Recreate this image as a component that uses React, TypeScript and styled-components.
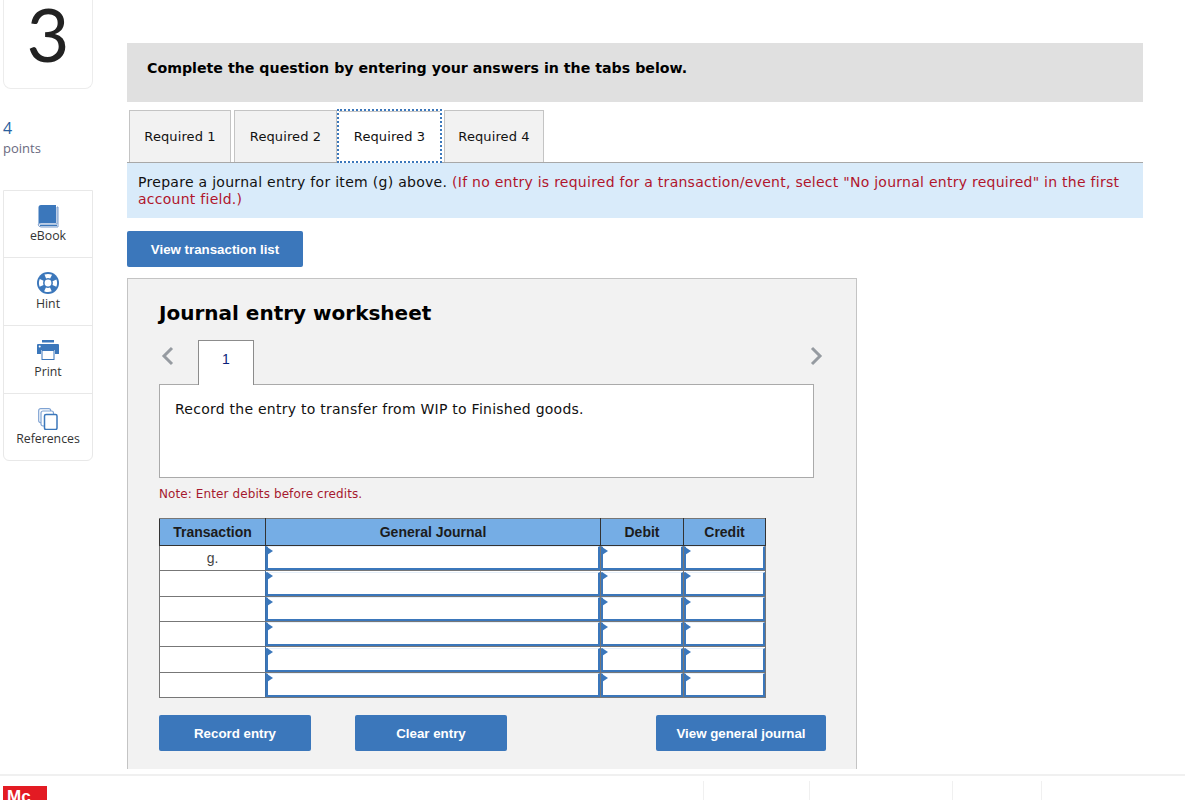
import React from "react";
import styled, { createGlobalStyle } from "styled-components";

const Global = createGlobalStyle`
  html, body { margin: 0; padding: 0; height: 100%; overflow: hidden; background: #fff; }
  * { box-sizing: border-box; }
  #root { height: 100vh; }
`;

const blue = "#3b77bb";
const verdana = `"DejaVu Sans", Verdana, sans-serif`;
const arial = `"Liberation Sans", Arial, sans-serif`;
const side = `"Open Sans", Roboto, sans-serif`;

const Page = styled.div`
  height: 100vh;
  display: flex;
  flex-direction: column;
  overflow: hidden;
`;
const Body = styled.div`
  flex: 1;
  min-height: 0;
  overflow: hidden;
  display: flex;
  padding-left: 3px;
  gap: 34px;
`;
const Sidebar = styled.aside`
  width: 90px;
  flex: none;
  font-family: ${side};
`;
const NumberCard = styled.div`
  height: 89px;
  border: 1px solid #ececec;
  border-top: none;
  border-radius: 0 0 8px 8px;
  display: flex;
  align-items: center;
  justify-content: center;
  font-family: Lato, sans-serif;
  font-size: 74px;
  font-weight: 400;
  line-height: 1;
  color: #222;
  padding-bottom: 20px;
`;
const Points = styled.div`
  margin-top: 30px;
  height: 71px;
`;
const PointsValue = styled.div`
  font-size: 16px;
  line-height: 18px;
  color: #2b5f9e;
`;
const PointsLabel = styled.div`
  font-size: 13px;
  line-height: 22px;
  color: #6a6a80;
`;
const Tools = styled.div`
  border: 1px solid #e8e8e8;
  border-radius: 0 0 6px 6px;
`;
const Tool = styled.div`
  height: 68px;
  display: flex;
  flex-direction: column;
  align-items: center;
  padding-top: 14px;
  font-size: 12.3px;
  line-height: 16px;
  color: #333;
  &:not(:last-child) { border-bottom: 1px solid #e8e8e8; }
  &:first-child { height: 67px; padding-top: 13px; }
  &:last-child { height: 66px; }
  svg { display: block; }
`;
const Main = styled.main`
  width: 1016px;
  flex: none;
  padding-top: 43px;
  font-family: ${verdana};
`;
const Banner = styled.div`
  height: 59px;
  background: #e0e0e0;
  padding: 0 0 10px 20px;
  display: flex;
  align-items: center;
  font-size: 14.2px;
  font-weight: 700;
  color: #000;
`;
const Tabs = styled.div`
  display: flex;
  margin-top: 8px;
  padding-left: 2px;
  height: 52px;
  gap: 3px;
`;
const Tab = styled.div<{ $w: number; $active?: boolean }>`
  width: ${(p) => p.$w}px;
  display: flex;
  align-items: center;
  justify-content: center;
  font-size: 13px;
  letter-spacing: 0.1px;
  color: #111;
  background: ${(p) => (p.$active ? "#fff" : "#f2f2f2")};
  border: 1px solid #c4c4c4;
  border-bottom: none;
  ${(p) =>
    p.$active &&
    `margin: -1px -1px 0 -3px;
     height: 54px;
     position: relative;
     z-index: 1;
     border: 2px dotted ${blue};
     box-shadow: inset 0 1px 0 #c4c4c4;`}
`;
const Instruction = styled.div`
  height: 56px;
  background: #d9ebfa;
  border-top: 1px solid #a8a8a8;
  padding: 11px 11px 0;
  font-size: 14px;
  line-height: 17px;
  letter-spacing: 0.29px;
  color: #111;
`;
const Red = styled.span`
  color: #b0152c;
  letter-spacing: 0.26px;
`;
const Button = styled.button<{ $w: number }>`
  width: ${(p) => p.$w}px;
  height: 36px;
  flex: none;
  border: none;
  border-radius: 2px;
  background: ${blue};
  color: #fff;
  font-family: ${arial};
  font-weight: 700;
  font-size: 13.3px;
  padding: 0;
`;
const TransactionRow = styled.div`
  margin-top: 13px;
  height: 47px;
`;
const Panel = styled.section`
  width: 730px;
  height: 491px;
  background: #f2f2f2;
  border: 1px solid #c4c4c4;
  border-bottom: none;
  padding: 0 30px 0 31px;
`;
const PanelTitle = styled.h2`
  margin: 0;
  padding-top: 22px;
  height: 61px;
  font-size: 20px;
  line-height: 25px;
  font-weight: 700;
  color: #000;
`;
const Pager = styled.div`
  display: flex;
  align-items: center;
  width: 655px;
  height: 45px;
  position: relative;
  z-index: 1;
  margin-bottom: -1px;
`;
const PagerArrow = styled.svg<{ $right?: boolean }>`
  width: 14px;
  height: 20px;
  flex: none;
  margin-bottom: 14px;
  margin-left: ${(p) => (p.$right ? "auto" : "2px")};
  margin-right: ${(p) => (p.$right ? "-9px" : "0")};
`;
const PageTab = styled.div`
  width: 56px;
  height: 45px;
  margin-left: 23px;
  padding-top: 9px;
  background: #fff;
  border: 1px solid #8c8c8c;
  border-bottom: none;
  text-align: center;
  font-family: ${arial};
  font-size: 14px;
  line-height: 18px;
  color: #0a1f7a;
`;
const Prompt = styled.div`
  width: 655px;
  height: 94px;
  background: #fff;
  border: 1px solid #aaa;
  padding: 16px 15px 0;
  font-size: 14px;
  line-height: 17px;
  letter-spacing: 0.25px;
  color: #111;
`;
const Note = styled.div`
  margin-top: 8px;
  height: 32px;
  font-size: 12px;
  line-height: 16px;
  letter-spacing: 0.1px;
  color: #a6192e;
`;
const Sheet = styled.table`
  width: 606px;
  table-layout: fixed;
  border-collapse: collapse;
  font-family: ${arial};
`;
const Head = styled.th<{ $w: number }>`
  width: ${(p) => p.$w}px;
  height: 27px;
  padding: 0;
  background: #75ade5;
  border: 1px solid #333;
  border-top-color: #777;
  font-size: 14px;
  font-weight: 700;
  color: #1c1c1c;
`;
const Row = styled.tr<{ $h: number }>`
  height: ${(p) => p.$h}px;
`;
const TxCell = styled.td`
  padding: 0;
  background: #fff;
  border: 1px solid #777;
  border-right-color: #3b6ea8;
  text-align: center;
  vertical-align: middle;
  font-size: 14px;
  line-height: 16px;
  color: #444;
`;
const EntryCell = styled.td`
  position: relative;
  padding: 0;
  background: #fff;
  border: 1px solid #777;
  &::before {
    content: "";
    position: absolute;
    left: 1px;
    top: 1px;
    border-left: 6px solid ${blue};
    border-top: 4px solid transparent;
    border-bottom: 4px solid transparent;
  }
`;
const EntryInput = styled.div`
  height: 100%;
  min-height: 24px;
  border: 2px solid ${blue};
  border-top: 1px solid #e6f0fb;
  background: #fff;
`;
const Actions = styled.div`
  display: flex;
  gap: 44px;
  margin-top: 17px;
`;
const PushedButton = styled(Button)`
  margin-left: auto;
`;
const Footer = styled.footer`
  height: 26px;
  flex: none;
  border-top: 2px solid #f0f0f0;
  display: flex;
  padding-left: 3px;
  overflow: hidden;
`;
const Logo = styled.div`
  width: 44px;
  height: 30px;
  margin-top: 10px;
  background: #e31b23;
  color: #fff;
  font-family: ${arial};
  font-weight: 700;
  font-size: 17px;
  line-height: 22px;
  padding-left: 4px;
`;
const FooterNav = styled.nav`
  margin-left: auto;
  margin-right: 143px;
  display: flex;
  padding-top: 5px;
`;
const FooterItem = styled.div<{ $w: number; $pad: number }>`
  width: ${(p) => p.$w}px;
  height: 40px;
  border-left: 1px solid #f0f0f0;
  padding: 12px 0 0 ${(p) => p.$pad}px;
`;
const FooterLast = styled.div`
  border-left: 1px solid #f0f0f0;
`;

const rows = [
  { h: 25, tx: "g." },
  { h: 26, tx: "" },
  { h: 25, tx: "" },
  { h: 25, tx: "" },
  { h: 26, tx: "" },
  { h: 25, tx: "" },
];

const BookIcon = () => (
  <svg width="22" height="24" viewBox="0 0 22 24">
    <path d="M4 1h15v18H4a2.5 2.5 0 0 0-2.5 2V3.5A2.5 2.5 0 0 1 4 1z" fill={blue} />
    <path d="M20 3h1v20H4a3 3 0 0 1-2.8-2.5A2.6 2.6 0 0 1 4 20h16z" fill="#fff" stroke="#7a9ccc" strokeWidth="1" />
    <path d="M3 21.5h17" stroke={blue} strokeWidth="1.2" />
  </svg>
);
const BuoyIcon = () => (
  <svg width="22" height="22" viewBox="0 0 22 22" style={{ marginBottom: 2 }}>
    <circle cx="11" cy="11" r="11" fill={blue} />
    <circle cx="11" cy="11" r="3.4" fill="#fff" />
    <circle
      cx="11"
      cy="11"
      r="7"
      fill="none"
      stroke="#fff"
      strokeWidth="4.2"
      strokeDasharray="6 4.996"
      strokeDashoffset="3"
    />
  </svg>
);
const PrintIcon = () => (
  <svg width="22" height="20" viewBox="0 0 22 20" style={{ marginBottom: 4 }}>
    <rect x="5" y="0" width="12" height="2.5" fill={blue} />
    <path d="M1 4h20a1 1 0 0 1 1 1v9h-4v-4H4v4H0V5a1 1 0 0 1 1-1z" fill={blue} />
    <rect x="5" y="10.5" width="12" height="9" fill="#fff" stroke={blue} strokeWidth="1" />
    <circle cx="2.7" cy="6.4" r="1" fill="#fff" />
  </svg>
);
const CopyIcon = () => (
  <svg width="20" height="22" viewBox="0 0 20 22" style={{ marginBottom: 1 }}>
    <rect x="0.7" y="0.7" width="12" height="14" rx="2" fill="#fff" stroke="#7fa3d3" strokeWidth="1.2" />
    <rect x="3" y="3" width="12.5" height="15" rx="2" fill="#fff" stroke="#7fa3d3" strokeWidth="1.2" />
    <rect x="6.5" y="6.5" width="12.5" height="15" rx="1.5" fill="#fff" stroke={blue} strokeWidth="1.5" />
  </svg>
);

const Chevron = ({ right }: { right?: boolean }) => (
  <PagerArrow $right={right} viewBox="0 0 14 20">
    <polyline
      points={right ? "3,2 11,10 3,18" : "11,2 3,10 11,18"}
      fill="none"
      stroke="#969ba1"
      strokeWidth="3"
    />
  </PagerArrow>
);

export default function App() {
  return (
    <Page>
      <Global />
      <Body>
        <Sidebar>
          <NumberCard>3</NumberCard>
          <Points>
            <PointsValue>4</PointsValue>
            <PointsLabel>points</PointsLabel>
          </Points>
          <Tools>
            <Tool><BookIcon />eBook</Tool>
            <Tool><BuoyIcon />Hint</Tool>
            <Tool><PrintIcon />Print</Tool>
            <Tool><CopyIcon />References</Tool>
          </Tools>
        </Sidebar>
        <Main>
          <Banner>Complete the question by entering your answers in the tabs below.</Banner>
          <Tabs>
            <Tab $w={102}>Required 1</Tab>
            <Tab $w={103}>Required 2</Tab>
            <Tab $w={105} $active>Required 3</Tab>
            <Tab $w={100}>Required 4</Tab>
          </Tabs>
          <Instruction>
            Prepare a journal entry for item (g) above.{" "}
            <Red>
              (If no entry is required for a transaction/event, select "No journal entry required" in the first account field.)
            </Red>
          </Instruction>
          <TransactionRow>
            <Button $w={176}>View transaction list</Button>
          </TransactionRow>
          <Panel>
            <PanelTitle>Journal entry worksheet</PanelTitle>
            <Pager>
              <Chevron />
              <PageTab>1</PageTab>
              <Chevron right />
            </Pager>
            <Prompt>Record the entry to transfer from WIP to Finished goods.</Prompt>
            <Note>Note: Enter debits before credits.</Note>
            <Sheet>
              <thead>
                <tr>
                  <Head $w={106}>Transaction</Head>
                  <Head $w={335}>General Journal</Head>
                  <Head $w={83}>Debit</Head>
                  <Head $w={82}>Credit</Head>
                </tr>
              </thead>
              <tbody>
                {rows.map((r, i) => (
                  <Row key={i} $h={r.h}>
                    <TxCell>{r.tx}</TxCell>
                    <EntryCell><EntryInput /></EntryCell>
                    <EntryCell><EntryInput /></EntryCell>
                    <EntryCell><EntryInput /></EntryCell>
                  </Row>
                ))}
              </tbody>
            </Sheet>
            <Actions>
              <Button $w={152}>Record entry</Button>
              <Button $w={152}>Clear entry</Button>
              <PushedButton $w={170}>View general journal</PushedButton>
            </Actions>
          </Panel>
        </Main>
      </Body>
      <Footer>
        <Logo>Mc</Logo>
        <FooterNav>
          <FooterItem $w={106} $pad={0} />
          <FooterItem $w={143} $pad={87}>
            <svg width="20" height="3" viewBox="0 0 20 3"><path d="M0 1.5h20" stroke={blue} strokeWidth="3" strokeDasharray="6 1" /></svg>
          </FooterItem>
          <FooterItem $w={89} $pad={0} />
          <FooterLast />
        </FooterNav>
      </Footer>
    </Page>
  );
}
